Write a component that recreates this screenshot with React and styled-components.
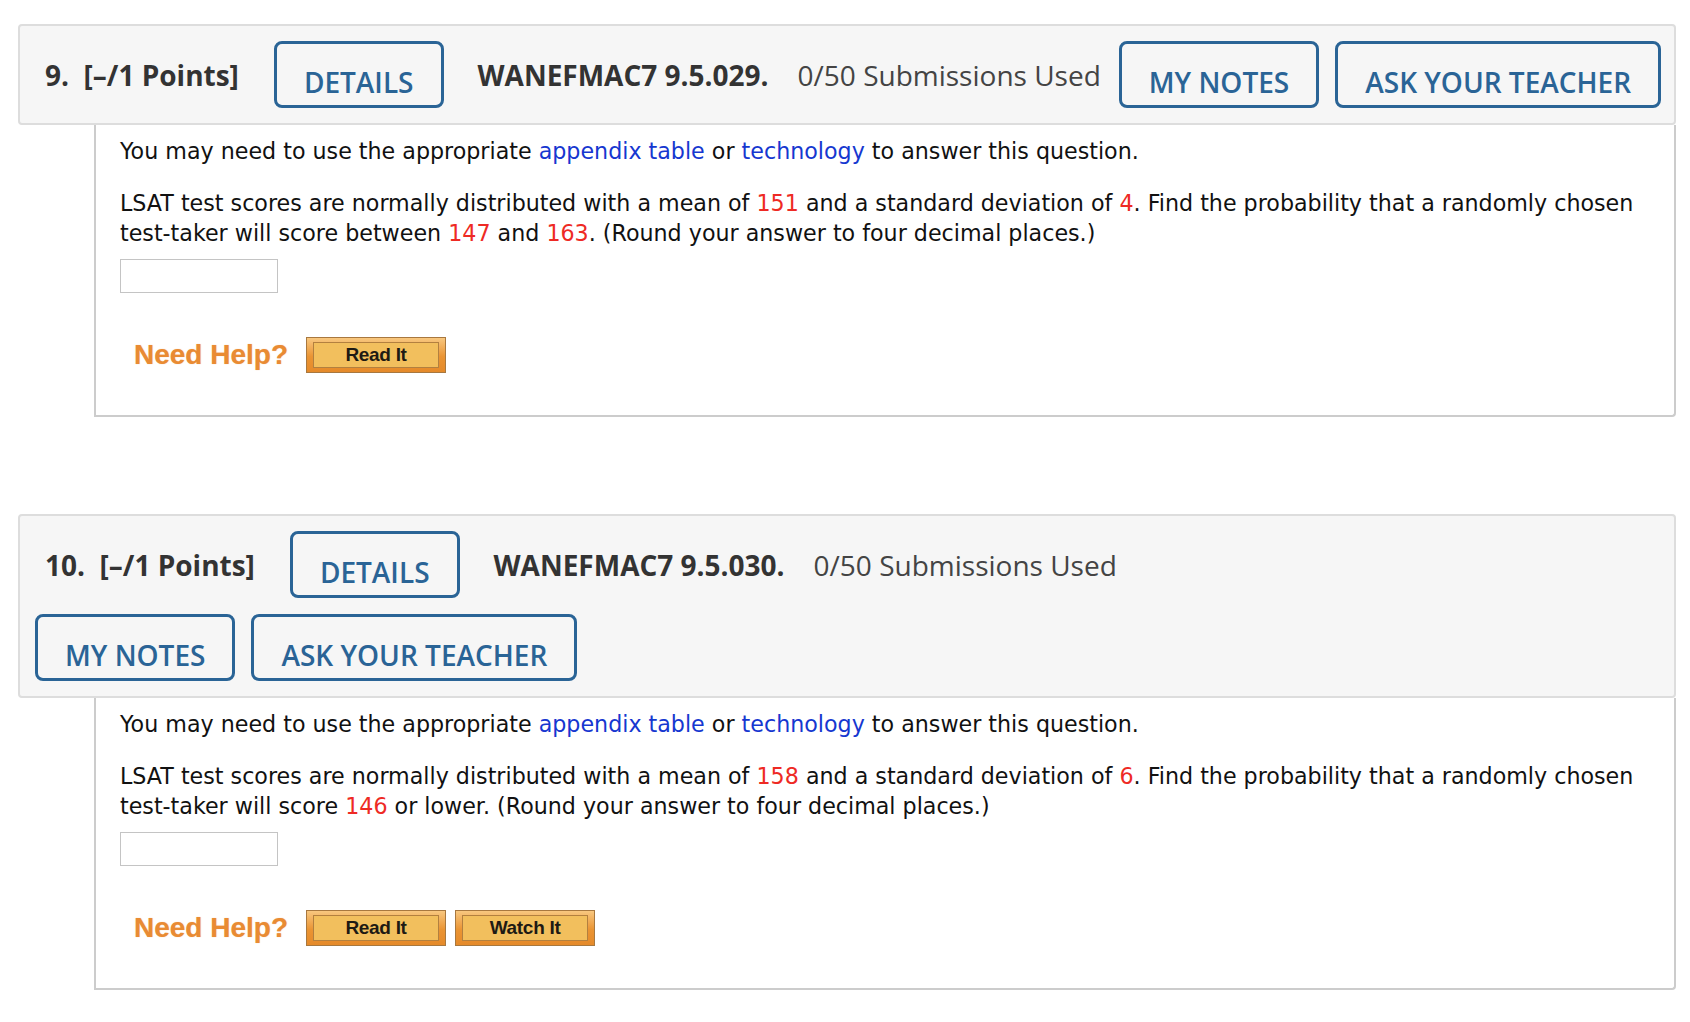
import styled, { createGlobalStyle } from "styled-components";

const GlobalStyle = createGlobalStyle`
  body {
    margin: 0;
    background: #fff;
  }
`;

const Page = styled.div`
  padding: 24px 14px 30px 18px;
`;

const Question = styled.section`
  margin-bottom: 97px;

  &:last-child {
    margin-bottom: 0;
  }
`;

const Header = styled.div`
  display: flex;
  flex-wrap: ${(p) => (p.$stacked ? "wrap" : "nowrap")};
  align-items: center;
  gap: 16px;
  padding: 15px;
  background: #f6f6f6;
  border: 2px solid #dddddd;
  border-radius: 4px;
  font-family: "Open Sans", sans-serif;
  font-size: 28px;
  color: #333;
`;

const Title = styled.span`
  font-weight: 700;
  margin: 0 19px 0 10px;
  white-space: nowrap;
`;

const Code = styled.span`
  font-weight: 700;
  margin-left: 18px;
  white-space: nowrap;
`;

const Submissions = styled.span`
  font-weight: 400;
  color: #444;
  margin: 0 2px 0 13px;
  white-space: nowrap;
`;

const Tools = styled.div`
  display: flex;
  gap: 16px;
  flex-basis: ${(p) => (p.$stacked ? "100%" : "auto")};
`;

const HeaderButton = styled.button`
  font-family: "Open Sans", sans-serif;
  font-weight: 600;
  font-size: 28px;
  line-height: 27px;
  text-transform: uppercase;
  color: #2a6496;
  background: transparent;
  border: 3px solid #2a6496;
  border-radius: 8px;
  padding: 25px 27px 9px;
  white-space: nowrap;
  cursor: pointer;
`;

const Body = styled.div`
  margin-left: 76px;
  border: 2px solid #cccccc;
  border-top: none;
  border-bottom-right-radius: 4px;
  padding: 11px 24px 42px 24px;
  font-family: "DejaVu Sans", Verdana, sans-serif;
  font-size: 22.2px;
  line-height: 30px;
  color: #111;
`;

const Para = styled.p`
  margin: 0 0 22px;

  &:last-of-type {
    margin-bottom: 0;
  }
`;

const Link = styled.a`
  color: #1637d0;
  text-decoration: none;
`;

const Num = styled.span`
  color: #ee2a24;
`;

const AnswerInput = styled.input`
  display: block;
  box-sizing: border-box;
  width: 158px;
  height: 34px;
  margin-top: 11px;
  border: 1px solid #c4c4c4;
  background: #fff;
`;

const HelpRow = styled.div`
  display: flex;
  align-items: center;
  margin: 44px 0 0 14px;
`;

const NeedHelp = styled.span`
  font-family: "Liberation Sans", Arial, sans-serif;
  font-weight: 700;
  font-size: 28px;
  color: #e98b33;
  text-shadow: 0 0 1px rgba(233, 139, 51, 0.6);
  margin-right: 18px;
`;

const HelpButton = styled.button`
  box-sizing: border-box;
  width: 140px;
  height: 36px;
  padding: 4px 6px;
  margin-right: 9px;
  border: 1px solid #a8783f;
  background: linear-gradient(#f8c77f, #ea9433 55%, #e58a2a);
  cursor: pointer;
`;

const HelpButtonFace = styled.span`
  display: flex;
  align-items: center;
  justify-content: center;
  height: 100%;
  box-sizing: border-box;
  border: 1px solid #b3803f;
  background: #f2bf5d;
  font-family: "Liberation Sans", Arial, sans-serif;
  font-weight: 700;
  font-size: 19px;
  letter-spacing: -0.3px;
  color: #1e1a14;
`;

const questions = [
  {
    number: 9,
    code: "WANEFMAC7 9.5.029.",
    stacked: false,
    text: (
      <>
        LSAT test scores are normally distributed with a mean of <Num>151</Num>{" "}
        and a standard deviation of <Num>4</Num>. Find the probability that a
        randomly chosen test-taker will score between <Num>147</Num> and{" "}
        <Num>163</Num>. (Round your answer to four decimal places.)
      </>
    ),
    help: ["Read It"],
  },
  {
    number: 10,
    code: "WANEFMAC7 9.5.030.",
    stacked: true,
    text: (
      <>
        LSAT test scores are normally distributed with a mean of <Num>158</Num>{" "}
        and a standard deviation of <Num>6</Num>. Find the probability that a
        randomly chosen test-taker will score <Num>146</Num> or lower. (Round
        your answer to four decimal places.)
      </>
    ),
    help: ["Read It", "Watch It"],
  },
];

function App() {
  return (
    <Page>
      <GlobalStyle />
      {questions.map((q) => (
        <Question key={q.number}>
          <Header $stacked={q.stacked}>
            <Title>
              {q.number}.{"\u00a0 "}[–/1 Points]
            </Title>
            <HeaderButton>Details</HeaderButton>
            <Code>{q.code}</Code>
            <Submissions>0/50 Submissions Used</Submissions>
            <Tools $stacked={q.stacked}>
              <HeaderButton>My Notes</HeaderButton>
              <HeaderButton>Ask Your Teacher</HeaderButton>
            </Tools>
          </Header>
          <Body>
            <Para>
              You may need to use the appropriate <Link href="#">appendix table</Link>{" "}
              or <Link href="#">technology</Link> to answer this question.
            </Para>
            <Para>{q.text}</Para>
            <AnswerInput type="text" />
            <HelpRow>
              <NeedHelp>Need Help?</NeedHelp>
              {q.help.map((h) => (
                <HelpButton key={h}>
                  <HelpButtonFace>{h}</HelpButtonFace>
                </HelpButton>
              ))}
            </HelpRow>
          </Body>
        </Question>
      ))}
    </Page>
  );
}

export default App;
